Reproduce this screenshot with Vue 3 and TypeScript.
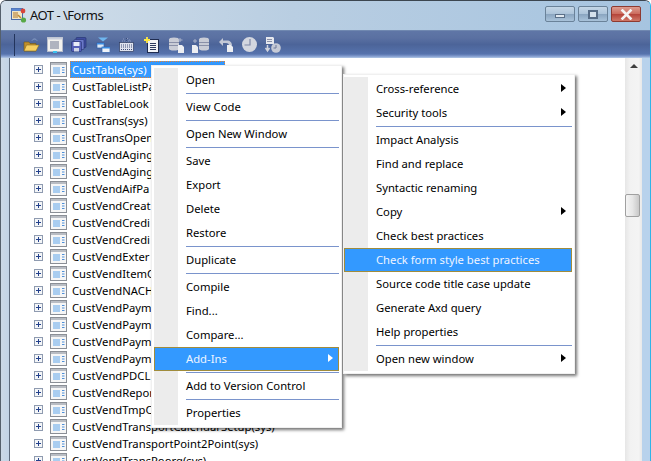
<script setup lang="ts">
interface MenuEntry {
  label?: string
  sep?: boolean
  arrow?: boolean
  active?: boolean
}

const rows: string[] = [
  'CustTable(sys)', 'CustTableListPa', 'CustTableLook', 'CustTrans(sys)',
  'CustTransOpen', 'CustVendAging', 'CustVendAging', 'CustVendAifPa',
  'CustVendCreat', 'CustVendCredi', 'CustVendCredi', 'CustVendExter',
  'CustVendItemC', 'CustVendNACH', 'CustVendPaym', 'CustVendPaym',
  'CustVendPaym', 'CustVendPaym', 'CustVendPDCL', 'CustVendRepor',
  'CustVendTmpC', 'CustVendTransportCalendarSetup(sys)', 'CustVendTransportPoint2Point(sys)',
  'CustVendTransPoorg(sys)'
]

const mainMenu: MenuEntry[] = [
  { label: 'Open' }, { sep: true },
  { label: 'View Code' }, { sep: true },
  { label: 'Open New Window' }, { sep: true },
  { label: 'Save' }, { label: 'Export' }, { label: 'Delete' }, { label: 'Restore' }, { sep: true },
  { label: 'Duplicate' }, { sep: true },
  { label: 'Compile' }, { label: 'Find...' }, { label: 'Compare...' },
  { label: 'Add-Ins', arrow: true, active: true }, { sep: true },
  { label: 'Add to Version Control' }, { sep: true },
  { label: 'Properties' }
]

const subMenu: MenuEntry[] = [
  { label: 'Cross-reference', arrow: true }, { label: 'Security tools', arrow: true }, { sep: true },
  { label: 'Impact Analysis' }, { label: 'Find and replace' }, { label: 'Syntactic renaming' },
  { label: 'Copy', arrow: true }, { label: 'Check best practices' },
  { label: 'Check form style best practices', active: true },
  { label: 'Source code title case update' }, { label: 'Generate Axd query' }, { label: 'Help properties' },
  { sep: true }, { label: 'Open new window', arrow: true }
]
</script>

<template>
  <div class="window">
    <header class="titlebar">
      <svg class="app-icon" width="16" height="16" viewBox="0 0 16 16">
        <rect x="0.5" y="1.5" width="11" height="11" fill="#f2e6c4" stroke="#4a6aa8" />
        <rect x="0.5" y="1.5" width="11" height="2.5" fill="#5a86d0" />
        <path d="M2 6h5M2 8h5M2 10h5" stroke="#b0762a" stroke-width="1" />
        <circle cx="12" cy="4" r="2.4" fill="#d8443a" />
        <path d="M7 8l3 3" stroke="#c08a30" stroke-width="1.5" />
        <circle cx="12.5" cy="13" r="2.6" fill="#58a846" />
      </svg>
      <span class="title">AOT - \Forms</span>
      <div class="caption-buttons">
        <button class="cap"><span class="min-glyph"></span></button>
        <button class="cap"><span class="max-glyph"></span></button>
        <button class="cap close">
          <svg width="13" height="11" viewBox="0 0 13 11">
            <path d="M2.5 1.5l8 8M10.5 1.5l-8 8" stroke="#f4f4f4" stroke-width="2.6" stroke-linecap="square" />
          </svg>
        </button>
      </div>
    </header>

    <div class="toolbar">
      <span class="grip"></span>
      <svg class="tb" style="margin-left:8px" width="17" height="16" viewBox="0 0 17 16">
        <path d="M1 5h5l1 1.500h6v7.500H1z" fill="#c08f2c" stroke="#6d5518" stroke-width=".6" />
        <path d="M3.500 8H16l-3 6H1z" fill="#f5cf62" stroke="#8a6c1c" stroke-width=".6" />
        <path d="M9 3.500c1.500-2 3.500-2 5 0" fill="none" stroke="#8ea4cc" />
      </svg>
      <svg class="tb" style="margin-left:7px" width="16" height="16" viewBox="0 0 16 16">
        <rect x=".5" y=".5" width="15" height="14" fill="#f2f2ee" stroke="#b5bccb" />
        <rect x=".5" y=".5" width="15" height="2" fill="#c9cfdc" />
        <path d="M3 5h9M3 7h9M3 9h9M3 11h9" stroke="#6d7690" />
        <rect x="6" y="14" width="4" height="2" fill="#3cc0ee" />
      </svg>
      <svg class="tb" style="margin-left:8px" width="16" height="15" viewBox="0 0 16 15">
        <rect x="5" y=".5" width="10" height="10" rx="1" fill="#3f4da0" stroke="#23306e" stroke-width=".6" />
        <rect x="3" y="2.500" width="10" height="10" rx="1" fill="#6a78c8" stroke="#23306e" stroke-width=".6" />
        <rect x=".5" y="4.500" width="10" height="10" rx="1" fill="#5560b8" stroke="#23306e" stroke-width=".6" />
        <rect x="2.500" y="5" width="6" height="4" fill="#e8ecf8" />
        <rect x="3" y="11" width="5" height="3.500" fill="#d0d6e8" />
      </svg>
      <svg class="tb" style="margin-left:9px" width="14" height="16" viewBox="0 0 14 16">
        <path d="M2 .5h10L7 4.500z" fill="#6fb6ee" />
        <rect x="1" y="6" width="7" height="5" fill="#dfe8f4" stroke="#2d62b0" stroke-width=".7" />
        <rect x="1" y="6" width="7" height="1.500" fill="#3a8ae0" />
        <rect x="6" y="10" width="8" height="5.500" fill="#eef2f8" stroke="#2d62b0" stroke-width=".7" />
        <rect x="6" y="10" width="8" height="1.500" fill="#3a8ae0" />
      </svg>
      <svg class="tb" style="margin-left:9px" width="15" height="15" viewBox="0 0 15 15">
        <rect x=".5" y="5.500" width="14" height="9" fill="#dfe3ee" stroke="#2e3c62" stroke-width=".7" />
        <path d="M2 8h11M2 10h11M2 12.500h11" stroke="#3e4c78" stroke-dasharray="1 1" />
        <path d="M3 4h9M4 2h1M8 1.500h1M10 3h1" stroke="#8c9ac0" stroke-dasharray="1 1" />
        <path d="M7.500 1v5" stroke="#3a4a78" stroke-dasharray="1 1" />
      </svg>
      <svg class="tb" style="margin-left:10px" width="15" height="16" viewBox="0 0 15 16">
        <rect x="3.500" y="2.500" width="11" height="13" fill="#f2f4f8" stroke="#1f2c50" />
        <path d="M6 6.500h6M6 8.500h6M6 10.500h6M6 12.500h6" stroke="#2c3a60" />
        <path d="M3 0v6M0 3h6" stroke="#ffe940" stroke-width="1.800" />
      </svg>
      <svg class="tb" style="margin-left:9px" width="17" height="16" viewBox="0 0 17 16">
        <path d="M1 2.500a5 2 0 0 1 10 0v9a5 2 0 0 1-10 0z" fill="#c9ccd6" />
        <path d="M1 5.500h10M1 8.500h10" stroke="#8a90a8" />
        <path d="M10 8h4l2 2v6h-6z" fill="#eceef2" />
        <path d="M12 5V1M10.500 3h4" stroke="#aab2ca" />
      </svg>
      <svg class="tb" style="margin-left:7px" width="17" height="16" viewBox="0 0 17 16">
        <path d="M7 2.500a5 2 0 0 1 10 0v9a5 2 0 0 1-10 0z" fill="#c9ccd6" />
        <path d="M7 5.500h10M7 8.500h10" stroke="#8a90a8" />
        <path d="M0 8h4l2 2v6H0z" fill="#eceef2" />
        <path d="M3 6V2M1 4h4" stroke="#aab2ca" />
      </svg>
      <svg class="tb" style="margin-left:9px" width="16" height="15" viewBox="0 0 16 15">
        <path d="M1 5l4-4v2.500h4c3 0 5 2 5 5H11c0-1.500-1-2.500-3-2.500H5V9z" fill="#c3c8d6" />
        <path d="M9 8h4l2 2v5H9z" fill="#eceef2" />
      </svg>
      <svg class="tb" style="margin-left:8px" width="15" height="15" viewBox="0 0 15 15">
        <circle cx="7.500" cy="7.500" r="7.500" fill="#d3d6df" />
        <path d="M8 2v6H2.500" fill="none" stroke="#7f88a8" stroke-width="1.200" />
      </svg>
      <svg class="tb" style="margin-left:8px" width="16" height="16" viewBox="0 0 16 16">
        <path d="M1 0h7l1 1v6H1z" fill="#e6e8ee" />
        <path d="M2 2.500h5M2 4.500h5" stroke="#8a90a8" />
        <path d="M2.500 8v5M0.500 11l2 3 2-3" fill="none" stroke="#d0d3dd" stroke-width="1.500" />
        <circle cx="11" cy="11" r="4.800" fill="#c6cad6" />
        <path d="M11 8v3h-2.500" fill="none" stroke="#6f7898" />
      </svg>
    </div>

    <div class="client">
      <ul class="tree">
        <li v-for="(row, i) in rows" :key="i" class="row">
          <svg width="9" height="9" viewBox="0 0 9 9" class="expander">
            <rect x=".5" y=".5" width="8" height="8" fill="#f4f6f8" stroke="#8f9bb0" />
            <path d="M2 4.500h5M4.500 2v5" stroke="#23408c" />
          </svg>
          <svg width="17" height="15" viewBox="0 0 17 15" class="form-icon">
            <rect x=".5" y=".5" width="16" height="14" fill="#f6f6f6" stroke="#8b8f96" />
            <rect x="1" y="1" width="15" height="2" fill="#b9bdc4" />
            <rect x="3" y="5" width="7" height="7" fill="#a9cdf0" />
            <path d="M12 5.500h2.500M12 8h2.500M12 10.500h2.500" stroke="#4f8fd8" />
          </svg>
          <span class="label" :class="{ selected: i === 0 }">{{ row }}</span>
        </li>
      </ul>
      <div class="scrollbar">
        <span class="up-arrow"></span>
        <span class="thumb"></span>
      </div>
    </div>

    <nav class="menu main">
      <div class="menu-body">
        <template v-for="(item, i) in mainMenu" :key="i">
          <div v-if="item.sep" class="sep"></div>
          <div v-else class="item" :class="{ active: item.active }">
            {{ item.label }}
            <span v-if="item.arrow" class="arrow"></span>
          </div>
        </template>
      </div>
    </nav>

    <nav class="menu sub">
      <div class="menu-body">
        <template v-for="(item, i) in subMenu" :key="i">
          <div v-if="item.sep" class="sep"></div>
          <div v-else class="item" :class="{ active: item.active }">
            {{ item.label }}
            <span v-if="item.arrow" class="arrow"></span>
          </div>
        </template>
      </div>
    </nav>
  </div>
</template>

<style>
html, body { margin: 0; background: #fff; }
</style>

<style scoped>
.window {
  position: relative;
  width: 651px;
  height: 461px;
  overflow: hidden;
  display: flex;
  flex-direction: column;
  box-sizing: border-box;
  border-top: 1px solid #3c4650;
  border-left: 1px solid #55606c;
  border-right: 1px solid #2fb4e8;
  border-radius: 6px 6px 0 0;
  background: linear-gradient(90deg, #cbd8e6 0, #c0d2e6 10px, #b8d2ec 100%);
  font-family: "Noto Sans", "Open Sans", sans-serif;
  font-size: 11.25px;
  color: #000;
}
.titlebar {
  flex: none;
  height: 29px;
  display: flex;
  align-items: center;
  padding-left: 10px;
  background: linear-gradient(90deg, #d3dfea 0, #b9cee2 45%, #a6c4e0 100%);
}
.app-icon { flex: none; margin-right: 3px; margin-top: -2px; }
.title { font-size: 13px; letter-spacing: -.5px; margin-top: -2px; color: #101010; }
.caption-buttons {
  display: flex;
  gap: 3px;
  margin-left: auto;
  margin-right: 9px;
  margin-top: -3px;
}
.cap {
  width: 30px;
  height: 16px;
  padding: 0;
  border: 1px solid #6a8299;
  border-radius: 2px;
  background: linear-gradient(180deg, #c4d6e6 0, #adc4da 48%, #8aa5c0 52%, #a9c3da 100%);
  display: flex;
  align-items: center;
  justify-content: center;
}
.close {
  border-color: #8e3a30;
  background: linear-gradient(180deg, #dc9c90 0, #cc6c5e 48%, #b5443a 52%, #cf7868 100%);
}
.min-glyph {
  width: 10px;
  height: 4px;
  margin-top: 3px;
  box-sizing: border-box;
  background: #dfe8f0;
  border: 1px solid #5a6f88;
}
.max-glyph {
  width: 10px;
  height: 9px;
  box-sizing: border-box;
  background: #d5e1ec;
  border: 2px solid #566c86;
}
.toolbar {
  flex: none;
  height: 28px;
  display: flex;
  align-items: center;
  box-sizing: border-box;
  padding-left: 13px;
  background: linear-gradient(180deg, #5f76a6 0, #5b71a2 25%, #4c6499 50%, #5673ad 85%, #7f99cc 93%, #b2c8e6 100%);
  border-top: 1px solid #7088b0;
}
.grip { flex: none; width: 1px; height: 22px; background: #22345c; }
.tb { flex: none; }
.client {
  flex: 1;
  min-height: 0;
  display: flex;
  margin: 0 8px;
  background: #fff;
  border-left: 1px solid #5d6a7c;
}
.tree {
  flex: 1;
  margin: 0;
  padding: 3px 0 0 24px;
  list-style: none;
  overflow: hidden;
}
.row {
  height: 17px;
  display: flex;
  align-items: center;
  white-space: nowrap;
}
.expander { flex: none; margin-right: 7px; }
.form-icon { flex: none; margin-right: 3px; }
.label { padding: 0 2px; line-height: 17px; }
.label.selected {
  box-sizing: border-box;
  width: 155px;
  background: #3399ff;
  color: #fff;
  outline: 1px dotted #e8812c;
  outline-offset: -1px;
}
.scrollbar {
  position: relative;
  flex: none;
  width: 17px;
  background: linear-gradient(90deg, #e6e6e6, #f2f2f2 30%, #f4f4f4 80%, #e8e8e8);
}
.up-arrow {
  position: absolute;
  left: 5px;
  top: 6px;
  border-left: 4px solid transparent;
  border-right: 4px solid transparent;
  border-bottom: 4px solid #404040;
}
.thumb {
  position: absolute;
  left: 0;
  top: 136px;
  width: 15px;
  height: 23px;
  box-sizing: border-box;
  border: 1px solid #a0a0a0;
  border-radius: 2px;
  background: linear-gradient(90deg, #f4f4f4, #e6e6e6 50%, #c8c8c8);
}
.menu {
  position: absolute;
  box-sizing: border-box;
  background: #fff;
  border: 1px solid #f0f0f0;
  box-shadow: 2px 2px 3px rgba(0, 0, 0, .55);
}
.main { left: 150px; top: 64px; width: 191px; padding: 2px; }
.sub { left: 342px; top: 73px; width: 232px; padding: 2px 2px 2px 0; }
.menu-body { background: linear-gradient(90deg, #ececec 24px, #fff 24px); }
.item {
  position: relative;
  height: 24px;
  line-height: 24px;
  padding-left: 32px;
  box-sizing: border-box;
  white-space: nowrap;
}
.item.active {
  background: #3399ff;
  color: #eef4ff;
  outline: 1px solid #a08c3c;
  outline-offset: -1px;
}
.sep {
  height: 1px;
  margin: 1px 0 1px 32px;
  background: #7a94cc;
}
.arrow {
  position: absolute;
  right: 6px;
  top: 7px;
  border-top: 4px solid transparent;
  border-bottom: 4px solid transparent;
  border-left: 5px solid #000;
}
.item.active .arrow { border-left-color: #fff; }
</style>
